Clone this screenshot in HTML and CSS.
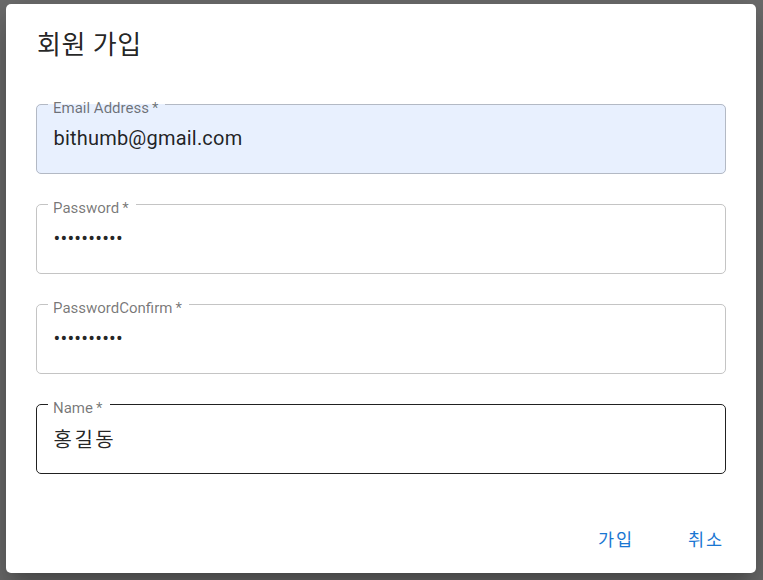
FILE: index.html
```html
<!DOCTYPE html>
<html lang="ko">
<head>
<meta charset="utf-8">
<title>회원 가입</title>
<link rel="stylesheet" href="styles.css">
</head>
<body>
<div class="backdrop">
  <div class="dialog" role="dialog" aria-labelledby="dlg-title">
    <h2 class="dialog-title" id="dlg-title">회원 가입</h2>
    <form class="dialog-content">
      <fieldset class="field field--autofill">
        <legend class="field-label">Email Address&thinsp;*</legend>
        <input class="field-input" type="email" value="bithumb@gmail.com">
      </fieldset>
      <fieldset class="field">
        <legend class="field-label">Password&thinsp;*</legend>
        <input class="field-input" type="password" value="1234567890">
      </fieldset>
      <fieldset class="field">
        <legend class="field-label">PasswordConfirm&thinsp;*</legend>
        <input class="field-input" type="password" value="1234567890">
      </fieldset>
      <fieldset class="field field--hover">
        <legend class="field-label">Name&thinsp;*</legend>
        <input class="field-input field-input--ko" type="text" value="홍길동">
      </fieldset>
    </form>
    <div class="dialog-actions">
      <button class="text-button" type="button">가입</button>
      <button class="text-button" type="button">취소</button>
    </div>
  </div>
</div>
</body>
</html>
```

FILE: styles.css
```css
html, body {
  margin: 0;
  padding: 0;
}

body {
  background: #6c6c6c;
  font-family: Roboto, "Noto Sans CJK KR", sans-serif;
  color: rgba(0, 0, 0, 0.87);
}

.backdrop {
  box-sizing: border-box;
  height: 580px;
  padding: 4px 7px 7px 6px;
  display: flex;
}

.dialog {
  flex: 1;
  display: flex;
  flex-direction: column;
  background: #fff;
  border-radius: 5px;
  box-shadow: 0 11px 15px -7px rgba(0, 0, 0, 0.2), 0 24px 38px 3px rgba(0, 0, 0, 0.14), 0 9px 46px 8px rgba(0, 0, 0, 0.12);
}

.dialog-title {
  margin: 0;
  padding: 21px 30px 19px 31px;
  font-family: Roboto, "Noto Sans CJK KR", sans-serif;
  font-size: 26px;
  line-height: 40px;
  letter-spacing: 0.5px;
  font-weight: 400;
  color: rgba(0, 0, 0, 0.87);
}

.dialog-content {
  margin: 0;
  padding: 7px 30px 0;
  display: flex;
  flex-direction: column;
  gap: 17px;
}

.field {
  margin: 0;
  padding: 0 16.5px;
  border: 1px solid #c4c4c4;
  border-radius: 5px;
  min-width: 0;
}

.field--autofill {
  background: #e8f0fe;
  border-color: #b3b9c4;
}

.field--hover {
  border-color: #212121;
}

.field-label {
  margin-left: -6px;
  padding: 7px 7px 0 5.5px;
  font-size: 15px;
  line-height: 20px;
  color: rgba(0, 0, 0, 0.54);
}

.field-input {
  display: block;
  box-sizing: border-box;
  width: 100%;
  margin: 0;
  padding: 8px 0 23px;
  height: 55px;
  border: 0;
  outline: none;
  background: transparent;
  font-family: Roboto, "Noto Sans CJK KR", sans-serif;
  font-size: 20px;
  line-height: 24px;
  letter-spacing: 0.2px;
  color: rgba(0, 0, 0, 0.87);
}

.field-input--ko {
  letter-spacing: 2.5px;
}

.dialog-actions {
  margin-top: auto;
  padding: 10px;
  display: flex;
  justify-content: flex-end;
  gap: 10px;
}

.text-button {
  min-width: 80px;
  padding: 7.5px 10px;
  border: 0;
  border-radius: 5px;
  background: transparent;
  font-family: Roboto, "Noto Sans CJK KR", sans-serif;
  font-size: 17.5px;
  line-height: 30.6px;
  letter-spacing: 2px;
  font-weight: 400;
  color: #1976d2;
  cursor: pointer;
}
```
